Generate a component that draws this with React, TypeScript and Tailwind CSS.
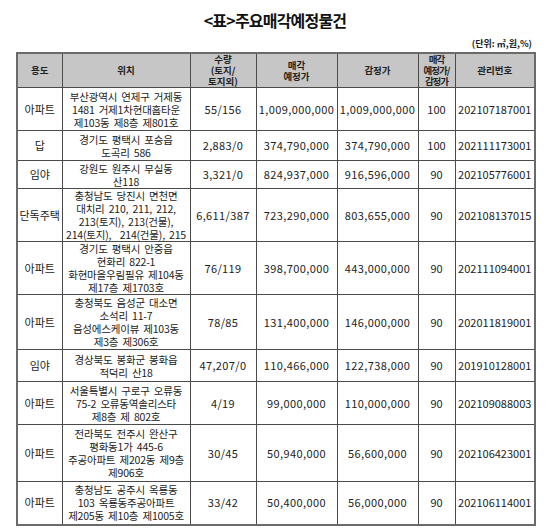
const rows = [
  { use: '아파트', loc: ['부산광역시 연제구 거제동', '1481 거제1차현대홈타운', '제103동 제8층 제801호'], qty: '55/156', sale: '1,009,000,000', appr: '1,009,000,000', ratio: '100', no: '202107187001', h: 'h-[43px]' },
  { use: '답', loc: ['경기도 평택시 포승읍', '도곡리 586'], qty: '2,883/0', sale: '374,790,000', appr: '374,790,000', ratio: '100', no: '202111173001', h: 'h-[30px]' },
  { use: '임야', loc: ['강원도 원주시 무실동', '산118'], qty: '3,321/0', sale: '824,937,000', appr: '916,596,000', ratio: '90', no: '202105776001', h: 'h-[28px]' },
  { use: '단독주택', loc: ['충청남도 당진시 면천면', '대치리 210, 211, 212,', '213(토지), 213(건물),', '214(토지),  214(건물), 215'], qty: '6,611/387', sale: '723,290,000', appr: '803,655,000', ratio: '90', no: '202108137015', h: 'h-[53px]' },
  { use: '아파트', loc: ['경기도 평택시 안중읍', '현화리 822-1', '화현마을우림필유 제104동', '제17층 제1703호'], qty: '76/119', sale: '398,700,000', appr: '443,000,000', ratio: '90', no: '202111094001', h: 'h-[53px]' },
  { use: '아파트', loc: ['충청북도 음성군 대소면', '소석리 11-7', '음성에스케이뷰 제103동', '제3층 제306호'], qty: '78/85', sale: '131,400,000', appr: '146,000,000', ratio: '90', no: '202011819001', h: 'h-[55px]' },
  { use: '임야', loc: ['경상북도 봉화군 봉화읍', '적덕리 산18'], qty: '47,207/0', sale: '110,466,000', appr: '122,738,000', ratio: '90', no: '201910128001', h: 'h-[32px]' },
  { use: '아파트', loc: ['서울특별시 구로구 오류동', '75-2 오류동역솔리스타', '제8층 제 802호'], qty: '4/19', sale: '99,000,000', appr: '110,000,000', ratio: '90', no: '202109088003', h: 'h-[43px]' },
  { use: '아파트', loc: ['전라북도 전주시 완산구', '평화동1가 445-6', '주공아파트 제202동 제9층', '제906호'], qty: '30/45', sale: '50,940,000', appr: '56,600,000', ratio: '90', no: '202106423001', h: 'h-[57px]' },
  { use: '아파트', loc: ['충청남도 공주시 옥룡동', '103 옥룡동주공아파트', '제205동 제10층 제1005호'], qty: '33/42', sale: '50,400,000', appr: '56,000,000', ratio: '90', no: '202106114001', h: 'h-[43px]' },
]

const cell = 'border border-[#4a4a4a] text-center align-middle p-0'
const num = `${cell} tracking-[0.4px]`

export default function App() {
  return (
    <div className="w-[550px] h-[530px] bg-white text-[#222] font-['Noto_Sans_CJK_KR',sans-serif] overflow-hidden">
      <div className="pt-[10px] flex justify-center">
        <h1 className="text-[16px] font-bold leading-[20px] tracking-[-0.8px] text-[#111]">&lt;표&gt;주요매각예정물건</h1>
      </div>
      <div className="flex justify-end pr-[18px] mt-[7px] h-[13px]">
        <span className="text-[9px] font-bold leading-[13px]">(단위: ㎡,원,%)</span>
      </div>
      <div className="pl-[16px] mt-[2px]">
        <table className="table-fixed border-collapse w-[518px] border-2 border-[#6a6a6a] text-[11px] leading-[13px]">
          <colgroup>
            <col className="w-[45px]" />
            <col className="w-[128px]" />
            <col className="w-[66px]" />
            <col className="w-[81px]" />
            <col className="w-[81px]" />
            <col className="w-[37px]" />
            <col className="w-[80px]" />
          </colgroup>
          <thead>
            <tr className="h-[33px] bg-[#c6c6c6] font-bold text-[9.5px] leading-[11px]">
              <th className={cell}>용도</th>
              <th className={cell}>위치</th>
              <th className={cell}>수량<br />(토지/<br />토지외)</th>
              <th className={cell}>매각<br />예정가</th>
              <th className={cell}>감정가</th>
              <th className={`${cell} tracking-[-1px]`}>매각<br />예정가/<br />감정가</th>
              <th className={cell}>관리번호</th>
            </tr>
          </thead>
          <tbody>
            {rows.map((r) => (
              <tr key={r.no} className={r.h}>
                <td className={cell}>{r.use}</td>
                <td className={`${cell} whitespace-pre text-[10.5px] tracking-[-0.2px] [word-spacing:2px]`}>
                  {r.loc.map((l, i) => (
                    <div key={i}>{l}</div>
                  ))}
                </td>
                <td className={num}>{r.qty}</td>
                <td className={num}>{r.sale}</td>
                <td className={num}>{r.appr}</td>
                <td className={cell}>{r.ratio}</td>
                <td className={cell}>{r.no}</td>
              </tr>
            ))}
          </tbody>
        </table>
      </div>
    </div>
  )
}
